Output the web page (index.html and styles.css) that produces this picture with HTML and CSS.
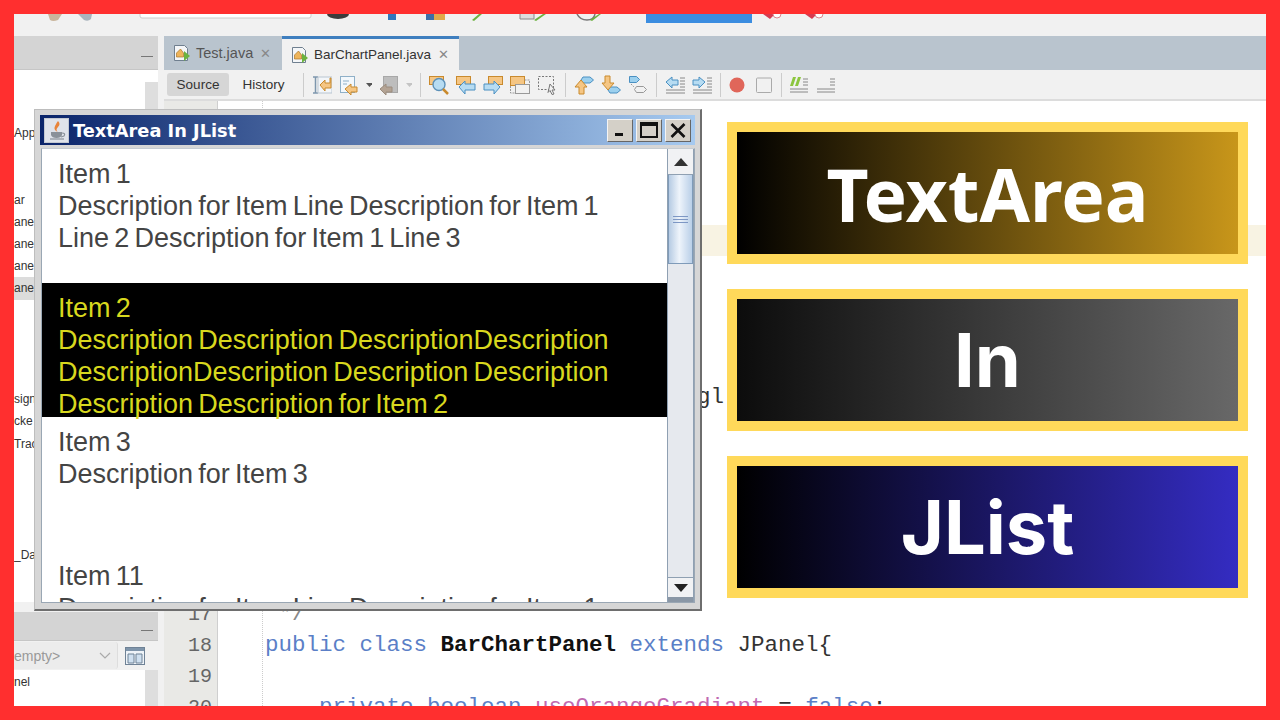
FILE: index.html
```html
<!DOCTYPE html>
<html lang="en">
<head>
    <meta charset="UTF-8">
    <title>TextArea In JList</title>
    <link rel="stylesheet" href="styles.css">
</head>
<body>
<div class="frame">
    <div class="top-strip">
        <svg class="strip-art" width="1252" height="22" viewBox="0 0 1252 22">
            <path d="M34 0h14l-4 6q-5 2-8 0z" fill="#c9b59c"/>
            <path d="M64 0h14l-1 5q-3 3-7 1z" fill="#a9b4bd"/>
            <rect x="126" y="-4" width="171" height="8" rx="2" fill="#fff" stroke="#ccc"/>
            <ellipse cx="324" cy="0" rx="11" ry="5" fill="#3c3c3c"/>
            <rect x="374" y="0" width="8" height="6" fill="#2f77bd"/>
            <rect x="412" y="0" width="8" height="6" fill="#3d6ea8"/>
            <rect x="420" y="0" width="11" height="6" fill="#e0a94a"/>
            <path d="M458 6l7-6h3l-8 7z" fill="#6bb23f"/>
            <path d="M506 0v5h14V0" fill="#ddd" stroke="#888"/>
            <path d="M520 6l9-6h3l-10 7z" fill="#6bb23f"/>
            <path d="M563 0q3 6 10 6t8-6" fill="none" stroke="#777" stroke-width="1.5"/>
            <path d="M576 6l9-6h2l-9 7z" fill="#6bb23f"/>
            <rect x="632" y="0" width="106" height="9" fill="#3b8de0"/>
            <path d="M749 0h12l-5 5z" fill="#d63a4e"/>
            <circle cx="763" cy="0" r="4" fill="#fff" stroke="#d9868e"/>
            <path d="M791 0h12l-5 5z" fill="#d63a4e"/>
            <circle cx="805" cy="0" r="4" fill="#fff" stroke="#d9868e"/>
        </svg>
    </div>

    <div class="workspace">
        <div class="side">
            <div class="panel-head"><span class="panel-min"></span></div>
            <div class="tree">
                <div class="tree-rows">
                    <div class="tree-row">App</div>
                    <div class="tree-row"></div>
                    <div class="tree-row"></div>
                    <div class="tree-row">ar</div>
                    <div class="tree-row">ane</div>
                    <div class="tree-row">ane</div>
                    <div class="tree-row">ane</div>
                    <div class="tree-row selected">ane</div>
                    <div class="tree-row"></div>
                    <div class="tree-row"></div>
                    <div class="tree-row"></div>
                    <div class="tree-row"></div>
                    <div class="tree-row">sign</div>
                    <div class="tree-row">cke</div>
                    <div class="tree-row">Trac</div>
                    <div class="tree-row"></div>
                    <div class="tree-row"></div>
                    <div class="tree-row"></div>
                    <div class="tree-row"></div>
                    <div class="tree-row">_Da</div>
                </div>
                <div class="side-scroll"></div>
            </div>
            <div class="splitter"></div>
            <div class="panel-head small"><span class="panel-min"></span></div>
            <div class="combo-row">
                <div class="combo">
                    <span>empty&gt;</span>
                    <svg width="12" height="8" viewBox="0 0 12 8"><path d="M1 1l5 5 5-5" fill="none" stroke="#aaa" stroke-width="1.2"/></svg>
                </div>
                <svg class="combo-icon" width="20" height="20" viewBox="0 0 20 20">
                    <rect x="0.5" y="1.5" width="19" height="17" fill="#eef3f8" stroke="#6f8296"/>
                    <rect x="1" y="2" width="18" height="3" fill="#7f95ab"/>
                    <path d="M3 8h6v9H3zM11 8h6v9h-6z" fill="#cfe0f0" stroke="#6f8296"/>
                </svg>
            </div>
            <div class="tree bottom">
                <div class="tree-rows">
                    <div class="tree-row">nel</div>
                </div>
                <div class="side-scroll flush"></div>
            </div>
        </div>

        <div class="main">
            <div class="tabs">
                <div class="tab">
                    <svg width="18" height="18" viewBox="0 0 18 18">
                        <path d="M1.5 1.5h10l3 3v12h-13z" fill="#f4f6f8" stroke="#6f7f8f"/>
                        <path d="M3.5 9l4-4 3 4v4h-7z" fill="#eeb45a" stroke="#a9762a" stroke-width=".7"/>
                        <path d="M11 7l6 5-6 5z" fill="#6cb33f"/>
                    </svg>
                    <span>Test.java</span><span class="tab-x">✕</span>
                </div>
                <div class="tab active">
                    <svg width="18" height="18" viewBox="0 0 18 18">
                        <path d="M1.5 1.5h10l3 3v12h-13z" fill="#f4f6f8" stroke="#6f7f8f"/>
                        <path d="M3.5 9l4-4 3 4v4h-7z" fill="#eeb45a" stroke="#a9762a" stroke-width=".7"/>
                        <path d="M11 7l6 5-6 5z" fill="#6cb33f"/>
                    </svg>
                    <span>BarChartPanel.java</span><span class="tab-x">✕</span>
                </div>
            </div>

            <div class="toolbar">
                <span class="view-btn on">Source</span>
                <span class="view-btn">History</span>
                <div class="tool-group">
                    <svg width="20" height="20" viewBox="0 0 20 20"><path d="M1 2h5M1 18h5M3.500 2v16" fill="none" stroke="#7d96ad" stroke-width="1.500"/><rect x="6" y="2" width="14" height="16" fill="#f3f6f9" stroke="#b9c6d2"/><path d="M8 10l5-5v3h5V3h1v10h-6v3z" fill="#f5c684" stroke="#c98a2d"/></svg>
                    <svg width="20" height="20" viewBox="0 0 20 20"><rect x="1.500" y="1.500" width="14" height="16" fill="#f3f8fc" stroke="#8fb0c8"/><path d="M4 6h6M4 9h4" stroke="#8fb0c8"/><path d="M6 14l6-5v3h6v5h-6v3z" fill="#f5c684" stroke="#c98a2d"/></svg>
                    <svg class="drop" width="6" height="20" viewBox="0 0 6 20"><path d="M0 8h7l-3.500 4z" fill="#555"/></svg>
                    <svg width="20" height="20" viewBox="0 0 20 20"><rect x="4.500" y="1.500" width="14" height="16" fill="#bdbdbd" stroke="#a8a8a8"/><path d="M1 14l6-5v3h6v5H7v3z" fill="#b3a394" stroke="#9b8c7e"/></svg>
                    <svg class="drop" width="6" height="20" viewBox="0 0 6 20"><path d="M0 8h7l-3.500 4z" fill="#c4c4c4"/></svg>
                </div>
                <div class="tool-group">
                    <svg width="20" height="20" viewBox="0 0 20 20"><rect x="0.500" y="1.500" width="14" height="8" fill="#f5c684" stroke="#c98a2d"/><circle cx="10" cy="9.500" r="6" fill="#b7dcf2" stroke="#5c90b8" stroke-width="1.400"/><path d="M14 14l5 5" stroke="#c98a2d" stroke-width="2.500"/></svg>
                    <svg width="20" height="20" viewBox="0 0 20 20"><rect x="0.500" y="1.500" width="14" height="8" fill="#f5c684" stroke="#c98a2d"/><path d="M3 12l6-6v3h10v6H9v4z" fill="#b7dcf2" stroke="#4a90c2"/></svg>
                    <svg width="20" height="20" viewBox="0 0 20 20"><rect x="5.500" y="1.500" width="14" height="8" fill="#f5c684" stroke="#c98a2d"/><path d="M17 12l-6-6v3H1v6h10v4z" fill="#b7dcf2" stroke="#4a90c2"/></svg>
                    <svg width="20" height="20" viewBox="0 0 20 20"><rect x="0.500" y="1.500" width="14" height="9" fill="#f5c684" stroke="#c98a2d"/><rect x="5.500" y="9.500" width="14" height="9" fill="#f1f1f1" stroke="#999"/><path d="M14.500 5h5v4M0.500 11v7h4" fill="none" stroke="#999" stroke-dasharray="2 1"/></svg>
                    <svg width="20" height="20" viewBox="0 0 20 20"><rect x="1.500" y="1.500" width="15" height="13" fill="none" stroke="#777" stroke-dasharray="2 1.500"/><path d="M13 9l5 6h-3l2 4-2 .5-2-4-2 2z" fill="#f1f1f1" stroke="#777"/></svg>
                </div>
                <div class="tool-group">
                    <svg width="20" height="20" viewBox="0 0 20 20"><path d="M9 2h7l3.500 3-3.500 3H9l-2-3z" fill="#9cd0ee" stroke="#4a90c2"/><path d="M7 5l6 7h-3v7H5v-7H1z" fill="#f5c684" stroke="#c98a2d"/></svg>
                    <svg width="20" height="20" viewBox="0 0 20 20"><path d="M9 12h7l3.500 3-3.500 3H9l-2-3z" fill="#9cd0ee" stroke="#4a90c2"/><path d="M4 1h5v7h4l-6 7-6-7h3z" fill="#f5c684" stroke="#c98a2d"/></svg>
                    <svg width="20" height="20" viewBox="0 0 20 20"><path d="M1.500 1.500h7l3 3-3 3h-7z" fill="#9cd0ee" stroke="#4a90c2"/><path d="M8.500 11.500h7l3 3-3 3h-7l-2-3z" fill="#f1f1f1" stroke="#999"/><path d="M3 9l3 3" stroke="#999" stroke-dasharray="1.500 1"/></svg>
                </div>
                <div class="tool-group">
                    <svg width="20" height="20" viewBox="0 0 20 20"><path d="M1 7l6-5v3h6v5H7v3z" fill="#b7dcf2" stroke="#4a90c2"/><path d="M15 3h5M15 6h5M15 9h5M15 12h5M1 15h19M1 18h19" stroke="#888"/></svg>
                    <svg width="20" height="20" viewBox="0 0 20 20"><path d="M13 7L7 2v3H1v5h6v3z" fill="#b7dcf2" stroke="#4a90c2"/><path d="M15 3h5M15 6h5M15 9h5M15 12h5M1 15h19M1 18h19" stroke="#888"/></svg>
                </div>
                <div class="tool-group tight">
                    <svg width="20" height="20" viewBox="0 0 20 20"><circle cx="8" cy="10" r="7.500" fill="#e0665a"/></svg>
                    <svg width="20" height="20" viewBox="0 0 20 20"><rect x="0.500" y="3" width="15" height="14.500" rx="1" fill="#f1f1f1" stroke="#aaa"/></svg>
                </div>
                <div class="tool-group">
                    <svg width="20" height="20" viewBox="0 0 20 20"><path d="M3 2h3l-3 9H0zM8 2h3l-3 9H5z" fill="#8cc63f"/><path d="M13 4h5M13 7h5M13 10h5M0 14h18M0 17h18" stroke="#888"/></svg>
                    <svg width="20" height="20" viewBox="0 0 20 20"><path d="M13 4h5M13 7h5M13 10h5M0 14h18M0 17h18" stroke="#888"/></svg>
                </div>
            </div>

            <div class="editor">
                <!-- lines above 17 sit under the swing window -->
                <div class="gutter">
                    <div>17</div><div>18</div><div>19</div><div>20</div>
                </div>
                <div class="code">
                    <div class="line"></div>
                    <div class="line"></div>
                    <div class="line"></div>
                    <div class="line"></div>
                    <div class="line current"></div>
                    <div class="line"></div>
                    <div class="line"></div>
                    <div class="line"></div>
                    <div class="line"></div>
                    <div class="line"><span class="peek">gl</span></div>
                    <div class="line"></div>
                    <div class="line"></div>
                    <div class="line"></div>
                    <div class="line"></div>
                    <div class="line"></div>
                    <div class="line"></div>
                    <div class="line"><span class="cm"> */</span></div>
                    <div class="line"><span class="kw">public class</span> <b>BarChartPanel</b> <span class="kw">extends</span> JPanel{</div>
                    <div class="line"></div>
                    <div class="line">    <span class="kw">private boolean</span> <span class="field">useOrangeGradiant</span> = <span class="kw">false</span>;</div>
                </div>
            </div>
        </div>
    </div>

    <!-- swing window floating over the ide -->
    <div class="jwindow">
        <div class="jtitle">
            <span class="jicon">
                <svg width="22" height="22" viewBox="0 0 22 22">
                    <path d="M12 2q3 3 0 6t0 5q-5-2-3-6t3-5z" fill="#e8843a"/>
                    <path d="M5 13h11v3q-1 3-5.500 3T5 16z" fill="#8a9199"/>
                    <path d="M16 14q4 0 2 3l-3 1" fill="none" stroke="#8a9199" stroke-width="1.200"/>
                    <path d="M4 20h14" stroke="#8a9199" stroke-width="1.200"/>
                </svg>
            </span>
            <span class="jtitle-text">TextArea In JList</span>
            <span class="jbtns">
                <span class="jbtn"><svg width="14" height="14" viewBox="0 0 14 14"><rect x="2" y="10" width="8" height="3" fill="#111"/></svg></span>
                <span class="jbtn"><svg width="18" height="16" viewBox="0 0 18 16"><rect x="1" y="1" width="16" height="14" fill="none" stroke="#111" stroke-width="2"/><rect x="1" y="1" width="16" height="3" fill="#111"/></svg></span>
                <span class="jbtn"><svg width="16" height="15" viewBox="0 0 16 15"><path d="M1.500 1l13 13M14.500 1l-13 13" stroke="#111" stroke-width="2.600"/></svg></span>
            </span>
        </div>
        <div class="jbody">
            <div class="jlist">
                <div class="item">
                    <div>Item 1</div>
                    <div>Description for Item Line Description for Item 1 Line 2 Description for Item 1 Line 3</div>
                </div>
                <div class="item picked">
                    <div>Item 2</div>
                    <div>Description Description DescriptionDescription DescriptionDescription Description Description Description Description for Item 2</div>
                </div>
                <div class="item">
                    <div>Item 3</div>
                    <div>Description for Item 3</div>
                </div>
                <div class="item">
                    <div>Item 11</div>
                    <div>Description for Item Line Description for Item 1</div>
                </div>
            </div>
            <div class="jscroll">
                <div class="jarrow"><svg width="14" height="8" viewBox="0 0 14 8"><path d="M7 0l7 8H0z" fill="#333"/></svg></div>
                <div class="jthumb"><span></span><span></span><span></span></div>
                <div class="jtrack"></div>
                <div class="jarrow down"><svg width="14" height="8" viewBox="0 0 14 8"><path d="M0 0h14L7 8z" fill="#222"/></svg></div>
            </div>
        </div>
    </div>

    <div class="banners">
        <div class="banner gold">TextArea</div>
        <div class="banner grey">In</div>
        <div class="banner blue">JList</div>
    </div>
</div>
</body>
</html>
```
FILE: styles.css
```css
*{
    box-sizing: border-box;
}

body{
    margin: 0;
    padding: 0;
    background-color: #ff2f2f;
    font-family: 'Liberation Sans', Arial, sans-serif;
}

.frame{
    position: relative;
    width: 1280px;
    height: 720px;
    border: 14px solid #ff2f2f;
    background-color: #f1f1f1;
    overflow: hidden;
    display: flex;
    flex-direction: column;
}

.top-strip{
    height: 22px;
    flex: none;
}
.strip-art{
    display: block;
}

.workspace{
    flex: 1;
    display: flex;
    min-height: 0;
}

/* left column */
.side{
    width: 144px;
    margin-right: 6px;
    flex: none;
    display: flex;
    flex-direction: column;
}
.panel-head{
    height: 34px;
    flex: none;
    background: #d4d4d4;
    border-bottom: 1px solid #c6c6c6;
    display: flex;
    align-items: center;
    justify-content: flex-end;
    padding-right: 5px;
}
.panel-head.small{
    height: 29px;
}
.panel-min{
    width: 12px;
    height: 1px;
    margin-top: 8px;
    background: #777;
}
.tree{
    flex: 1;
    min-height: 0;
    display: flex;
    background: #fff;
}
.tree.bottom{
    flex: none;
    height: 36px;
}
.tree-rows{
    flex: 1;
    padding-top: 52px;
    font-size: 12px;
    color: #333;
}
.tree.bottom .tree-rows{
    padding-top: 0;
}
.tree-row{
    height: 22.2px;
    line-height: 22px;
}
.tree.bottom .tree-row{
    line-height: 24px;
}
.tree-row.selected{
    background: #dcdcdc;
}
.side-scroll{
    width: 13px;
    margin-top: 12px;
    background: #dedede;
}
.side-scroll.flush{
    margin-top: 0;
}
.splitter{
    height: 10px;
    flex: none;
}
.combo-row{
    height: 29px;
    flex: none;
    display: flex;
    align-items: center;
    background: #f1f1f1;
}
.combo{
    width: 104px;
    height: 27px;
    display: flex;
    align-items: center;
    justify-content: space-between;
    padding-right: 6px;
    background: #ececec;
    border-right: 1px solid #ddd;
    border-radius: 0 3px 3px 0;
    font-size: 14px;
    color: #999;
}
.combo-icon{
    margin-left: 7px;
}

/* editor column */
.main{
    flex: 1;
    min-width: 0;
    display: flex;
    flex-direction: column;
}
.tabs{
    height: 34px;
    flex: none;
    display: flex;
    background: #b9c4ce;
}
.tab{
    width: 118px;
    display: flex;
    align-items: center;
    padding-left: 9px;
    gap: 5px;
    font-size: 14.5px;
    color: #555;
}
.tab.active{
    width: 177px;
    padding-left: 9px;
    background: #f1f1f1;
    border-top: 3px solid #3f7fbf;
    font-size: 13.5px;
    color: #333;
}
.tab-x{
    margin-left: 2px;
    font-size: 13px;
    color: #888;
}
.toolbar{
    height: 31px;
    flex: none;
    display: flex;
    align-items: center;
    padding-left: 3px;
    background: #f1f1f1;
    border-bottom: 2px solid #dcdcdc;
}
.view-btn{
    width: 62px;
    height: 23px;
    line-height: 23px;
    text-align: center;
    font-size: 13.5px;
    color: #333;
    border-radius: 3px;
}
.view-btn.on{
    background: #d6d6d6;
}
.view-btn + .view-btn{
    width: 74px;
    padding-right: 5px;
}
.tool-group{
    display: flex;
    align-items: center;
    gap: 7px;
    height: 24px;
    padding: 0 8px;
    border-left: 1px solid #ccc;
}
.tool-group.tight{
    padding-right: 5px;
}
.tool-group svg{
    flex: none;
}

.editor{
    flex: 1;
    min-height: 0;
    display: flex;
    background: #fff;
    font-family: 'Liberation Mono', 'Courier New', monospace;
    font-size: 22.5px;
}
.gutter{
    width: 54px;
    flex: none;
    padding-top: 496px;
    padding-right: 5px;
    text-align: right;
    background: #e9e9e6;
    border-right: 1px solid #cfcfcf;
    font-size: 20px;
    color: #666;
}
.gutter div{
    height: 31px;
    line-height: 35px;
}
.code{
    flex: 1;
    margin-left: 44px;
    padding-left: 2px;
    border-left: 1px dotted #ccc;
    color: #333;
}
.line{
    height: 31px;
    line-height: 35px;
    white-space: pre;
}
.line.current{
    background: #f8f3e3;
}
.peek{
    margin-left: 32ch;
}
.kw{
    color: #5b7fc7;
}
.cm{
    color: #888;
}
.field{
    color: #c06ab0;
}
.line b{
    color: #111;
}

/* swing window */
.jwindow{
    position: absolute;
    left: 20px;
    top: 95px;
    width: 668px;
    height: 502px;
    padding: 5px 5px 6px 5px;
    display: flex;
    flex-direction: column;
    background: #d6d6d6;
    border: 1px solid #bdbdbd;
    border-right: 2px solid #6e6e6e;
    border-bottom: 2px solid #6e6e6e;
}
.jtitle{
    height: 30px;
    flex: none;
    display: flex;
    align-items: center;
    padding: 0 4px;
    background: linear-gradient(to right, #0a246a, #a6caf0);
}
.jicon{
    width: 25px;
    height: 25px;
    display: flex;
    align-items: center;
    justify-content: center;
    background: #dfe3ea;
    border: 1px solid #c2c8d2;
}
.jtitle-text{
    margin-left: 4px;
    font-family: 'DejaVu Sans', Verdana, sans-serif;
    font-size: 17.8px;
    font-weight: 700;
    color: #fff;
}
.jbtns{
    margin-left: auto;
    display: flex;
    gap: 3px;
}
.jbtn{
    width: 26px;
    height: 23px;
    display: flex;
    align-items: center;
    justify-content: center;
    background: #d4d0c8;
    border: 1px solid;
    border-color: #f4f4f4 #666 #666 #f4f4f4;
}
.jbody{
    flex: 1;
    min-height: 0;
    margin-top: 3px;
    margin-left: 1px;
    display: flex;
    background: #fff;
    border: 1px solid #9aa7b4;
    border-top-color: #c5ccd3;
}
.jlist{
    flex: 1;
    overflow: hidden;
    background: #fff;
    border-right: 1px solid #8fa0b2;
    font-size: 27px;
    line-height: 32px;
    word-spacing: -2.3px;
    color: #444;
}
.item{
    height: 134px;
    padding: 9px 24px 0 16px;
}
.item.picked{
    background: #000;
    color: #d8d81e;
}
.jscroll{
    width: 26px;
    flex: none;
    display: flex;
    flex-direction: column;
    background: #e6e9ee;
    border-right: 1px solid #8fa0b2;
}
.jarrow{
    height: 26px;
    flex: none;
    display: flex;
    align-items: center;
    justify-content: center;
    background: #f1f2f4;
    border-bottom: 1px solid #8fa0b2;
}
.jarrow.down{
    height: 25px;
    border-bottom: 5px solid #8a97a6;
    border-top: 1px solid #8fa0b2;
}
.jthumb{
    height: 89px;
    flex: none;
    display: flex;
    flex-direction: column;
    align-items: center;
    justify-content: center;
    gap: 2px;
    background: linear-gradient(to right, #b6cbe3, #eef4fb 45%, #b9cfe8);
    border-bottom: 1px solid #7f9bb9;
    border-left: 1px solid #7f9bb9;
    border-right: 1px solid #7f9bb9;
}
.jthumb span{
    width: 15px;
    height: 1px;
    background: #7d97c4;
}
.jtrack{
    flex: 1;
}

/* title cards */
.banners{
    position: absolute;
    left: 713px;
    top: 108px;
    width: 521px;
    display: flex;
    flex-direction: column;
    gap: 25px;
}
.banner{
    height: 142px;
    display: flex;
    align-items: center;
    justify-content: center;
    border: 10px solid #ffd95a;
    font-family: 'Inter', sans-serif;
    font-size: 74px;
    font-weight: 700;
    color: #fff;
}
.banner.gold{
    background: linear-gradient(to right, #000, #c8961a);
    font-family: 'Noto Sans', sans-serif;
    font-size: 73px;
}
.banner.grey{
    background: linear-gradient(to right, #0c0c0c, #686868);
}
.banner.blue{
    background: linear-gradient(to right, #000, #342cc2);
}
```
